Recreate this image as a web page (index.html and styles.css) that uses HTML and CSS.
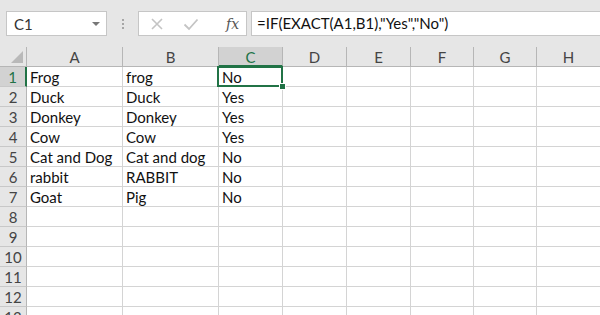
FILE: index.html
```html
<!DOCTYPE html>
<html>
    <head>
        <meta charset="UTF-8">
        <meta name="viewport" content="width=device-width, initial-scale=1.0">
        <title>EXACT</title>
        <link rel="stylesheet" href="styles.css">
    </head>

    <body>
        <div id="toolbar">
            <div class="name-box">
                <span>C1</span>
                <span class="arrow"></span>
            </div>
            <div class="dots"><i></i><i></i><i></i></div>
            <div class="buttons">
                <svg width="14" height="14" viewBox="0 0 14 14"><path d="M2 2 L12 12 M12 2 L2 12" stroke="#c4c4c4" stroke-width="1.6" fill="none"/></svg>
                <svg width="16" height="14" viewBox="0 0 16 14"><path d="M1.5 7.5 L6 12 L14.5 2.5" stroke="#c4c4c4" stroke-width="1.8" fill="none"/></svg>
                <span class="fx">fx</span>
            </div>
            <div class="formula">=IF(EXACT(A1,B1),"Yes","No")</div>
        </div>

        <div id="sheet">
            <div class="head corner"><span class="tri"></span></div>
            <div class="head">A</div>
            <div class="head">B</div>
            <div class="head active-col">C</div>
            <div class="head">D</div>
            <div class="head">E</div>
            <div class="head">F</div>
            <div class="head">G</div>
            <div class="head">H</div>

            <div class="rownum active-row">1</div>
            <div class="cell">Frog</div><div class="cell">frog</div><div class="cell selected">No</div>
            <div class="cell"></div><div class="cell"></div><div class="cell"></div><div class="cell"></div><div class="cell"></div>

            <div class="rownum">2</div>
            <div class="cell">Duck</div><div class="cell">Duck</div><div class="cell">Yes</div>
            <div class="cell"></div><div class="cell"></div><div class="cell"></div><div class="cell"></div><div class="cell"></div>

            <div class="rownum">3</div>
            <div class="cell">Donkey</div><div class="cell">Donkey</div><div class="cell">Yes</div>
            <div class="cell"></div><div class="cell"></div><div class="cell"></div><div class="cell"></div><div class="cell"></div>

            <div class="rownum">4</div>
            <div class="cell">Cow</div><div class="cell">Cow</div><div class="cell">Yes</div>
            <div class="cell"></div><div class="cell"></div><div class="cell"></div><div class="cell"></div><div class="cell"></div>

            <div class="rownum">5</div>
            <div class="cell">Cat and Dog</div><div class="cell">Cat and dog</div><div class="cell">No</div>
            <div class="cell"></div><div class="cell"></div><div class="cell"></div><div class="cell"></div><div class="cell"></div>

            <div class="rownum">6</div>
            <div class="cell">rabbit</div><div class="cell">RABBIT</div><div class="cell">No</div>
            <div class="cell"></div><div class="cell"></div><div class="cell"></div><div class="cell"></div><div class="cell"></div>

            <div class="rownum">7</div>
            <div class="cell">Goat</div><div class="cell">Pig</div><div class="cell">No</div>
            <div class="cell"></div><div class="cell"></div><div class="cell"></div><div class="cell"></div><div class="cell"></div>

            <div class="rownum">8</div>
            <div class="cell"></div><div class="cell"></div><div class="cell"></div><div class="cell"></div>
            <div class="cell"></div><div class="cell"></div><div class="cell"></div><div class="cell"></div>

            <div class="rownum">9</div>
            <div class="cell"></div><div class="cell"></div><div class="cell"></div><div class="cell"></div>
            <div class="cell"></div><div class="cell"></div><div class="cell"></div><div class="cell"></div>

            <div class="rownum">10</div>
            <div class="cell"></div><div class="cell"></div><div class="cell"></div><div class="cell"></div>
            <div class="cell"></div><div class="cell"></div><div class="cell"></div><div class="cell"></div>

            <div class="rownum">11</div>
            <div class="cell"></div><div class="cell"></div><div class="cell"></div><div class="cell"></div>
            <div class="cell"></div><div class="cell"></div><div class="cell"></div><div class="cell"></div>

            <div class="rownum">12</div>
            <div class="cell"></div><div class="cell"></div><div class="cell"></div><div class="cell"></div>
            <div class="cell"></div><div class="cell"></div><div class="cell"></div><div class="cell"></div>

            <div class="rownum">13</div>
            <div class="cell"></div><div class="cell"></div><div class="cell"></div><div class="cell"></div>
            <div class="cell"></div><div class="cell"></div><div class="cell"></div><div class="cell"></div>
        </div>
    </body>
</html>
```

FILE: styles.css
```css
body {
    font-family: 'Lato', 'Open Sans', sans-serif;
    background: #e6e6e6;
    margin: 0;
    padding: 0;
    width: 600px;
    height: 315px;
    overflow: hidden;
}
#toolbar {
    height: 47px;
    box-sizing: border-box;
    padding-top: 11px;
    display: flex;
    align-items: flex-start;
}
.name-box {
    margin-left: 6px;
    width: 101px;
    height: 25px;
    box-sizing: border-box;
    background: #fff;
    border: 1px solid #c6c6c6;
    display: flex;
    align-items: center;
    justify-content: space-between;
    padding: 0 6px 0 7px;
    font-size: 15px;
    color: #333;
}
.arrow {
    width: 0;
    height: 0;
    border-left: 4px solid transparent;
    border-right: 4px solid transparent;
    border-top: 4px solid #777;
}
.dots {
    width: 31px;
    height: 25px;
    display: flex;
    flex-direction: column;
    align-items: center;
    justify-content: center;
    gap: 2px;
}
.dots i {
    width: 2px;
    height: 2px;
    background: #a6a6a6;
}
.buttons {
    width: 109px;
    height: 25px;
    box-sizing: border-box;
    background: #fff;
    border: 1px solid #c6c6c6;
    display: flex;
    align-items: center;
    padding-left: 11px;
    gap: 19px;
}
.fx {
    font-family: 'DejaVu Serif', 'Liberation Serif', serif;
    font-style: italic;
    font-size: 14px;
    color: #555;
    margin-left: 8px;
}
.formula {
    margin-left: 4px;
    flex: 1;
    height: 25px;
    box-sizing: border-box;
    background: #fff;
    border: 1px solid #c6c6c6;
    border-right: none;
    padding-left: 5px;
    font-size: 15px;
    line-height: 23px;
    color: #111;
    white-space: nowrap;
}
#sheet {
    display: grid;
    grid-template-columns: 27px 96px 96px 64px 64px 64px 63px 63px 64px;
    grid-auto-rows: 20px;
    background: #fff;
}
#sheet > div {
    box-sizing: border-box;
    font-size: 15px;
    white-space: nowrap;
}
.head {
    background: #e6e6e6;
    border-right: 1px solid #b6b6b6;
    border-bottom: 1px solid #b6b6b6;
    color: #444;
    text-align: center;
    line-height: 20px;
}
.corner {
    position: relative;
}
.tri {
    position: absolute;
    right: 3px;
    bottom: 3px;
    width: 0;
    height: 0;
    border-left: 12px solid transparent;
    border-bottom: 12px solid #b9b9b9;
}
.active-col {
    background: #d2d2d2 !important;
    color: #217346 !important;
    border-bottom: 2px solid #217346 !important;
}
.rownum {
    background: #e6e6e6;
    border-right: 1px solid #b6b6b6;
    border-bottom: 1px solid #c8c8c8;
    color: #444;
    text-align: center;
    line-height: 20px;
}
.active-row {
    background: #d2d2d2 !important;
    color: #217346 !important;
    border-right: 2px solid #217346 !important;
}
.cell {
    border-right: 1px solid #d4d4d4;
    border-bottom: 1px solid #d4d4d4;
    padding-left: 3px;
    line-height: 21px;
    color: #111;
}
.selected {
    position: relative;
}
.selected::after {
    content: '';
    position: absolute;
    left: -2px;
    top: -1px;
    right: -1px;
    bottom: -1px;
    border: 2px solid #217346;
}
.selected::before {
    content: '';
    position: absolute;
    right: -4px;
    bottom: -4px;
    width: 5px;
    height: 5px;
    background: #217346;
    border: 1px solid #fff;
    z-index: 2;
}
```
